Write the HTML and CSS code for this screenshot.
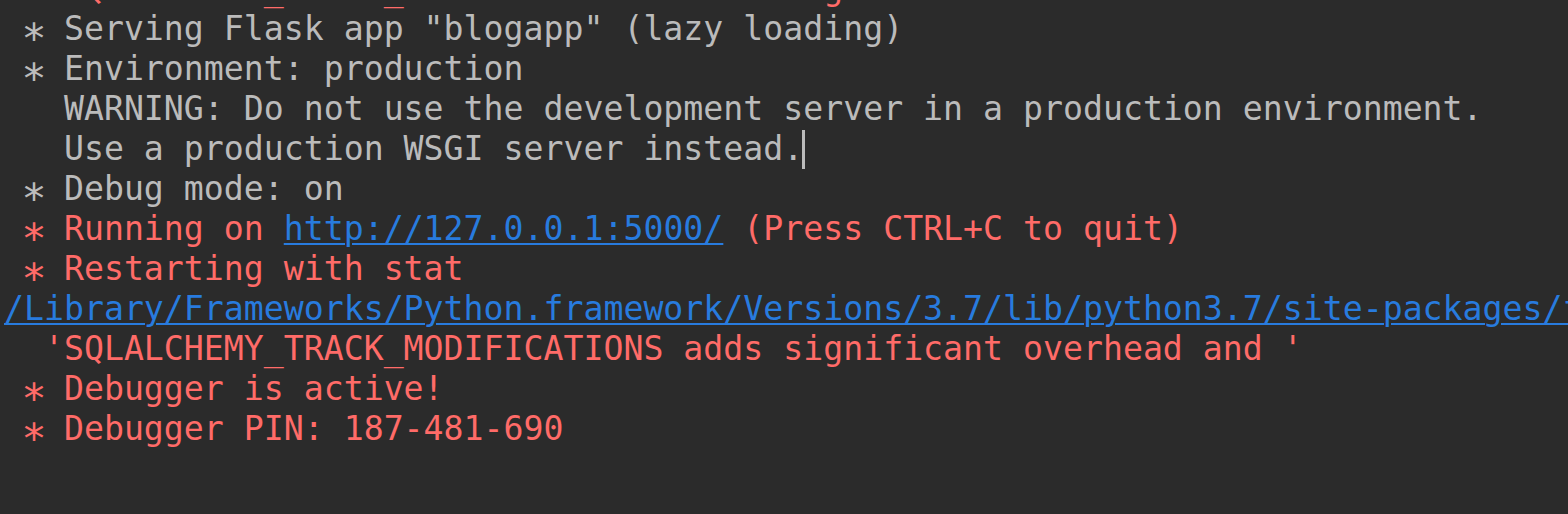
FILE: index.html
```html
<!DOCTYPE html>
<html lang="en">
<head>
    <meta charset="UTF-8">
    <meta name="viewport" content="width=device-width, initial-scale=1.0">
    <title>Run: blogapp</title>
    <link rel="stylesheet" href="styles.css">
</head>
<body>
    <div class="console">
        <div class="line err">  'SQLALCHEMY_TRACK_MODIFICATIONS adds significant overhead and '</div>
        <div class="line"> <span class="star">*</span> Serving Flask app "blogapp" (lazy loading)</div>
        <div class="line"> <span class="star">*</span> Environment: production</div>
        <div class="line">   WARNING: Do not use the development server in a production environment.</div>
        <div class="line">   Use a production WSGI server instead.<span class="cursor"></span></div>
        <div class="line"> <span class="star">*</span> Debug mode: on</div>
        <div class="line err"> <span class="star">*</span> Running on <a class="link" href="#">http://127.0.0.1:5000/</a> (Press CTRL+C to quit)</div>
        <div class="line err"> <span class="star">*</span> Restarting with stat</div>
        <div class="line err clip"><a class="link" href="#">/Library/Frameworks/Python.framework/Versions/3.7/lib/python3.7/site-packages/flask_sqlalchemy/__init__.py:835</a>: FSADeprecationWarning: SQLALCHEMY_TRACK_MODIFICATIONS adds significant overhead and will be disabled by default in the future.</div>
        <div class="line err">  'SQLALCHEMY_TRACK_MODIFICATIONS adds significant overhead and '</div>
        <div class="line err"> <span class="star">*</span> Debugger is active!</div>
        <div class="line err"> <span class="star">*</span> Debugger PIN: 187-481-690</div>
    </div>
</body>
</html>
```

FILE: styles.css
```css
html, body {
    margin: 0;
    height: 100%;
    overflow: hidden;
    background-color: #2b2b2b;
}
.console {
    margin-top: -31px;
    padding-left: 4px;
    font-family: "DejaVu Sans Mono", "Liberation Mono", monospace;
    font-size: 33.2px;
    line-height: 40px;
    color: #bbbbbb;
}
.line {
    white-space: pre;
    height: 40px;
}
.clip {
    overflow: hidden;
}
.star {
    display: inline-block;
    transform: translateY(10px) scale(1.25);
}
.err {
    color: #ff6b68;
}
.link {
    color: #287bde;
    text-decoration: underline;
    text-decoration-thickness: 2px;
    text-underline-offset: 3px;
}
.cursor {
    display: inline-block;
    width: 3px;
    height: 39px;
    margin-left: -1px;
    vertical-align: -9px;
    background-color: #bbbbbb;
}
```
